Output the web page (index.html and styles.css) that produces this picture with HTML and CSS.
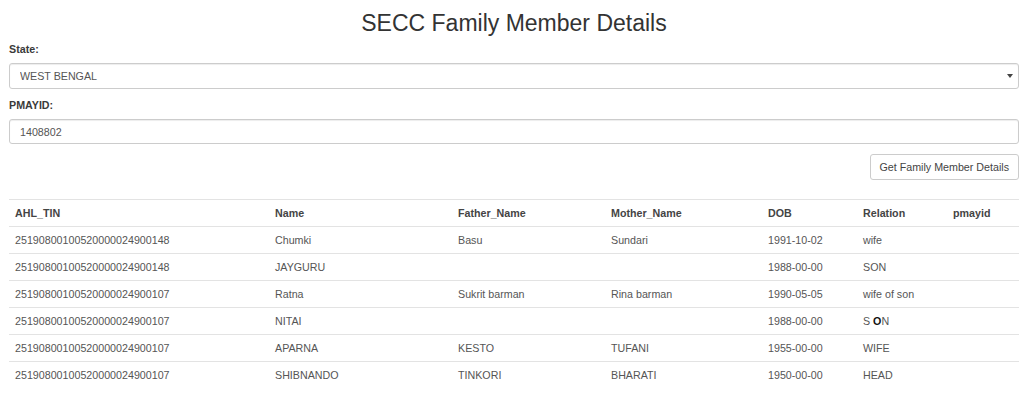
FILE: index.html
```html
<!DOCTYPE html>
<html lang="en">
<head>
  <meta charset="UTF-8">
  <meta name="viewport" content="width=device-width, initial-scale=1.0">
  <title>SECC Family Member Details</title>
  <link rel="stylesheet" href="styles.css">
</head>
<body>

<main class="container">
  <h1>SECC Family Member Details</h1>

  <!-- Search form -->
  <div class="form-group">
    <label for="state">State:</label>
    <div class="select-wrap">
      <select id="state" class="form-control">
        <option>WEST BENGAL</option>
      </select>
    </div>
  </div>

  <div class="form-group">
    <label for="pmayid">PMAYID:</label>
    <input type="text" id="pmayid" class="form-control" value="1408802">
  </div>

  <div class="actions">
    <button class="btn">Get Family Member Details</button>
  </div>

  <!-- Results -->
  <table class="results">
    <colgroup>
      <col class="c-tin">
      <col class="c-name">
      <col class="c-father">
      <col class="c-mother">
      <col class="c-dob">
      <col class="c-rel">
      <col>
    </colgroup>
    <thead>
      <tr>
        <th>AHL_TIN</th>
        <th>Name</th>
        <th>Father_Name</th>
        <th>Mother_Name</th>
        <th>DOB</th>
        <th>Relation</th>
        <th>pmayid</th>
      </tr>
    </thead>
    <tbody>
      <tr><td>25190800100520000024900148</td><td>Chumki</td><td>Basu</td><td>Sundari</td><td>1991-10-02</td><td>wife</td><td></td></tr>
      <tr><td>25190800100520000024900148</td><td>JAYGURU</td><td></td><td></td><td>1988-00-00</td><td>SON</td><td></td></tr>
      <tr><td>25190800100520000024900107</td><td>Ratna</td><td>Sukrit barman</td><td>Rina barman</td><td>1990-05-05</td><td>wife of son</td><td></td></tr>
      <tr><td>25190800100520000024900107</td><td>NITAI</td><td></td><td></td><td>1988-00-00</td><td>S <span class="blot">O</span>N</td><td></td></tr>
      <tr><td>25190800100520000024900107</td><td>APARNA</td><td>KESTO</td><td>TUFANI</td><td>1955-00-00</td><td>WIFE</td><td></td></tr>
      <tr><td>25190800100520000024900107</td><td>SHIBNANDO</td><td>TINKORI</td><td>BHARATI</td><td>1950-00-00</td><td>HEAD</td><td></td></tr>
    </tbody>
  </table>
</main>

</body>
</html>
```

FILE: styles.css
```css
body {
  font-family: 'Liberation Sans', Arial, sans-serif;
  font-size: 10.7px;
  margin: 0;
  padding: 0;
  background: #fff;
  color: #333;
}

.container {
  padding: 0 5px 0 9px;
}

h1 {
  font-size: 23px;
  font-weight: normal;
  line-height: 25px;
  text-align: center;
  margin: 11px 0 6px;
  color: #333;
}

.form-group {
  margin-bottom: 9px;
}

label {
  display: block;
  font-weight: bold;
  line-height: 15px;
  margin: 0 0 6px;
  color: #3a3a3a;
}

.form-control {
  display: block;
  box-sizing: border-box;
  width: 100%;
  height: 26px;
  padding: 0 10px;
  font-family: inherit;
  font-size: 10.7px;
  color: #555;
  background: #fff;
  border: 1px solid #ccc;
  border-radius: 3px;
  box-shadow: inset 0 1px 1px rgba(0, 0, 0, 0.075);
  outline: none;
}

input.form-control {
  height: 25px;
}

.select-wrap {
  position: relative;
}

select.form-control {
  appearance: none;
  -webkit-appearance: none;
}

.select-wrap::after {
  content: "";
  position: absolute;
  right: 6px;
  top: 11px;
  border-left: 3px solid transparent;
  border-right: 3px solid transparent;
  border-top: 4px solid #444;
  pointer-events: none;
}

.actions {
  display: flex;
  justify-content: flex-end;
  padding-top: 1px;
  margin-bottom: 19px;
}

.btn {
  height: 26px;
  padding: 0 9px;
  font-family: inherit;
  font-size: 10.7px;
  color: #444;
  background: #fff;
  border: 1px solid #ccc;
  border-radius: 3px;
  cursor: pointer;
}

.results {
  width: 100%;
  table-layout: fixed;
  border-collapse: collapse;
}

.c-tin { width: 260px; }
.c-name { width: 183px; }
.c-father { width: 153px; }
.c-mother { width: 157px; }
.c-dob { width: 95px; }
.c-rel { width: 90px; }

.results th,
.results td {
  text-align: left;
  padding: 0 6px;
  height: 26px;
  line-height: 15px;
  border-top: 1px solid #e3e3e3;
  white-space: nowrap;
}

.results th {
  font-weight: bold;
  color: #444;
  border-bottom: 1px solid #e3e3e3;
}

.results td {
  color: #555;
}

.blot {
  font-weight: bold;
  color: #111;
}
```
